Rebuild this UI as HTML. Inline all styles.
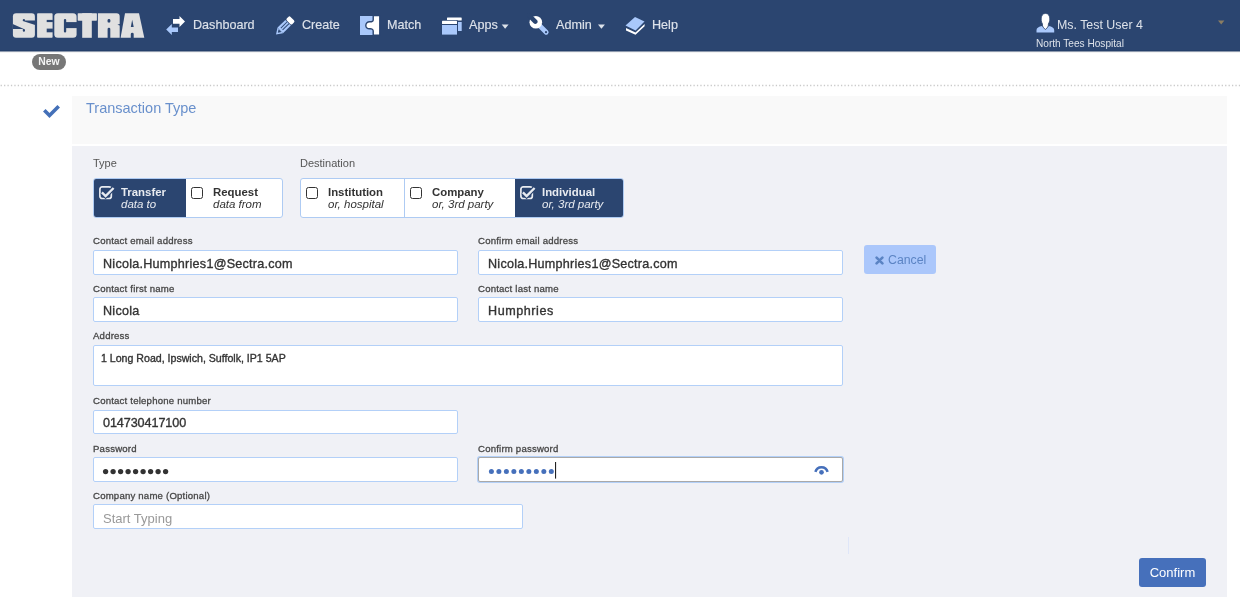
<!DOCTYPE html>
<html><head><meta charset="utf-8">
<style>
*{box-sizing:border-box;margin:0;padding:0}
html,body{width:1240px;height:600px;overflow:hidden;background:#fff;font-family:"Liberation Sans",sans-serif;position:relative}
.a{position:absolute;white-space:nowrap;will-change:transform}
#hdr{position:absolute;left:0;top:0;width:1240px;height:52px;background:#2b4570;border-bottom:1px solid #8d99ad;box-shadow:inset 0 -1px 0 #253f69,0 1px 0 #f3f3f3}
.nav{position:absolute;top:19px;font-size:12.6px;line-height:13px;color:#dde2ea;-webkit-text-stroke:0.15px #dde2ea}
.ic{position:absolute;top:15px}
#logo{position:absolute;left:13px;top:13px;width:131px;height:26px}
.lbl{position:absolute;font-size:9.6px;line-height:10px;color:#474747;-webkit-text-stroke:0.3px #474747;letter-spacing:0.2px}
.inp{position:absolute;height:25px;width:365px;background:#fff;border:1px solid #b3d0f8;border-radius:2px}
.itx{position:absolute;font-size:12.6px;line-height:13px;color:#333;-webkit-text-stroke:0.35px #333;letter-spacing:0.25px}
.bg{will-change:transform;position:absolute;top:178px;height:40px;border:1px solid #aecbf3;border-radius:3px;background:#fff;overflow:hidden}
.opt{position:absolute;top:0;height:38px}
.opt.sel{background:#2b4570}
.cb{position:absolute;top:8px;left:5px;width:12px;height:12px;border:1.6px solid #333;border-radius:2.5px}
.t1{position:absolute;top:8px;font-size:11.4px;line-height:11px;font-weight:bold;color:#333}
.t2{position:absolute;top:20px;font-size:11.5px;line-height:11px;font-style:italic;color:#333}
.sel .t1,.sel .t2{color:#e8ebf0}
</style></head>
<body>
<div id="hdr"></div>
<svg class="a" style="left:0;top:0" width="160" height="51" viewBox="0 0 160 51">
<g fill="#e0e0e0">
<rect x="12.9" y="13.2" width="22" height="24.6" rx="3.2"/>
<rect x="37.1" y="13.2" width="15.5" height="24.6" rx="0.8"/>
<rect x="54.3" y="13.2" width="22.3" height="24.6" rx="3.6"/>
<rect x="77.7" y="13.2" width="19.2" height="7.5" rx="0.6"/><rect x="82.2" y="13.2" width="9.6" height="24.6"/>
<path d="M97.9,13.2 H116.5 Q119.7,13.2 119.7,16.4 V24 L117.4,24.7 L119.7,25.5 V37.8 H97.9 Z"/>
<path d="M125,13.2 H139 L144.3,37.8 H120.6 Z"/>
</g>
<g fill="#2b4570">
<path d="M22.8,19.9 Q22.8,18.9 23.9,18.9 Q25,18.9 25,19.9 V20.6 H35.2 V25 L22.8,21.1 Z"/>
<path d="M12.7,24 L25,29.4 V30.8 Q25,31.8 23.9,31.8 Q22.8,31.8 22.8,30.8 V28.9 H12.7 Z"/>
<rect x="46.7" y="19.9" width="6.2" height="2.2"/><rect x="46.7" y="28.6" width="6.2" height="3.7"/>
<rect x="63.9" y="19" width="2.3" height="13.6" rx="1.1"/><rect x="65.5" y="22.1" width="11.5" height="6"/>
<rect x="107.6" y="19" width="2.7" height="3.6" rx="1.2"/><path d="M107.6,38 V28.9 Q107.6,27.7 108.95,27.7 Q110.3,27.7 110.3,28.9 V38 Z"/>
<path d="M132.2,19.7 L133.7,27 H130.8 Z"/><path d="M130.8,38 V34 Q130.8,32.7 132.25,32.7 Q133.7,32.7 133.7,34 V38 Z"/>
</g></svg>


<svg class="a" style="left:164px;top:13px" width="24" height="24" viewBox="0 0 24 24"><path d="M9,6 H15.5 V3 L21,8.5 L15.5,14 V10.8 H9 Z" fill="#fff"/><path d="M14,14.6 H7.8 V11 L2.2,16.6 L7.8,22 V19 H14 Z" fill="#a9c8fb"/></svg>
<svg class="a" style="left:273px;top:13px" width="24" height="24" viewBox="0 0 24 24"><g transform="translate(3,21.6) rotate(-44.5)"><path d="M0,0 L6,-3.9 L6,3.9 Z" fill="#a9c8fb"/><path d="M2.6,0 L5.6,-2 L5.6,2 Z" fill="#2b4570"/><rect x="6" y="-3.9" width="11" height="7.8" fill="#a9c8fb"/><rect x="8" y="-1.7" width="9" height="0.9" fill="#2b4570"/><rect x="8" y="0.8" width="9" height="0.9" fill="#2b4570"/><rect x="17.6" y="-4" width="5.2" height="8" rx="1.6" fill="#fff"/></g></svg>
<svg class="a" style="left:358px;top:13px" width="24" height="24" viewBox="0 0 24 24"><rect x="2" y="3" width="13" height="19" fill="#a9c8fb"/><path d="M15.2,2.6 H21.8 V22.2 H15.2 V18 C15.2,16.4 13.8,15.6 12,15.7 C9.4,16 7.8,14.6 7.8,12.4 C7.8,10.2 9.4,8.6 12,8.8 C13.8,8.9 15.2,8.2 15.2,7 Z" fill="#fff" stroke="#2b4570" stroke-width="1.4"/></svg>
<svg class="a" style="left:440px;top:13px" width="24" height="24" viewBox="0 0 24 24"><rect x="7" y="4.5" width="14.7" height="3.1" rx="0.6" fill="#fff"/><rect x="18" y="9" width="3.7" height="9" fill="#a9c8fb"/><rect x="1.3" y="7.1" width="16.4" height="15.2" fill="#2b4570"/><rect x="2" y="7.8" width="15" height="3.2" rx="0.5" fill="#fff"/><rect x="2" y="12" width="15" height="9.6" fill="#a9c8fb"/></svg>
<svg class="a" style="left:527px;top:13px" width="24" height="24" viewBox="0 0 24 24"><path d="M12.2,12.2 L19.2,19.2" stroke="#a9c8fb" stroke-width="4.8" stroke-linecap="round"/><circle cx="19" cy="19.2" r="1.1" fill="#2b4570"/><circle cx="8.8" cy="9.2" r="6.3" fill="#fff"/><path d="M8.3,8.7 L1.5,1.9" stroke="#2b4570" stroke-width="4.5" stroke-linecap="round"/></svg>
<svg class="a" style="left:623px;top:13px" width="24" height="24" viewBox="0 0 24 24"><path d="M3,15 L12.5,19.6 L21.6,11 L21.6,13.2 L12.5,21.8 L3,17.4 Z" fill="#fff"/><path d="M2.5,12.6 L12,4 L21.5,8.4 L12.6,17.6 Z" fill="#a9c8fb"/></svg>
<svg class="a" style="left:1033px;top:11px" width="24" height="24" viewBox="0 0 24 24"><path d="M3.5,21.6 V19 C3.5,16.8 6,15.6 9,15 L12.4,18.6 L15.8,15 C18.8,15.6 21.2,16.8 21.2,19 V21.6 Z" fill="#a9c8fb"/><path d="M12.5,2.4 C15.5,2.4 16.8,5 16.8,8 C16.8,10.5 16,12 15.2,13 L15.5,14 C15,16 13.5,18 12.4,18.4 C11.3,18 9.8,16 9.3,14 L9.6,13 C8.8,12 8.2,10.5 8.2,8 C8.2,5 9.5,2.4 12.5,2.4Z" fill="#fff" stroke="#2b4570" stroke-width="0.8"/></svg>
<svg class="a" style="left:1216px;top:19px" width="10" height="7" viewBox="0 0 10 7"><path d="M2,1.4 H8.4 L5.2,5.4 Z" fill="#8a7d62"/></svg>
<svg class="a" style="left:500px;top:23px" width="10" height="7" viewBox="0 0 10 7"><path d="M1.7,1.6 H8.6 L5.15,5.8 Z" fill="#dde2ea"/></svg>
<svg class="a" style="left:597px;top:23px" width="10" height="7" viewBox="0 0 10 7"><path d="M1.0,1.6 H7.9 L4.45,5.8 Z" fill="#dde2ea"/></svg>
<div class="nav a" style="left:193px">Dashboard</div>
<div class="nav a" style="left:302px">Create</div>
<div class="nav a" style="left:387px">Match</div>
<div class="nav a" style="left:469px">Apps</div>
<div class="nav a" style="left:556px">Admin</div>
<div class="nav a" style="left:652px">Help</div>

<div class="a" style="left:1057px;top:18.5px;font-size:12.4px;line-height:13px;color:#dde2ea">Ms. Test User 4</div>
<div class="a" style="left:1036px;top:38.7px;font-size:10.1px;line-height:10px;color:#dde2ea">North Tees Hospital</div>

<div class="a" style="left:32px;top:54px;width:34px;height:15.5px;border-radius:8px;background:#777;color:#f4f4f4;font-size:10.4px;line-height:16.5px;font-weight:bold;text-align:center">New</div>

<svg class="a" style="left:0;top:84px" width="1240" height="3"><line x1="0.6" y1="1.5" x2="1240" y2="1.5" stroke="#cacaca" stroke-width="1.4" stroke-dasharray="1.3 2.13"/></svg>

<svg class="a" style="left:42px;top:103px" width="20" height="17" viewBox="0 0 20 17"><path d="M2.3,7.3 L7.5,12.5 L16.7,3.3" fill="none" stroke="#4470b8" stroke-width="3.6"/></svg>

<div class="a" style="left:72px;top:96px;width:1155px;height:48px;background:#f9f9f9"></div>
<div class="a" style="left:86px;top:101px;font-size:14.5px;line-height:15px;color:#6990cc">Transaction Type</div>

<div class="a" style="left:72px;top:146px;width:1155px;height:451px;background:#f0f1f6"></div>

<div class="a" style="left:93px;top:158px;font-size:11px;line-height:10px;color:#555">Type</div>
<div class="a" style="left:300px;top:158px;font-size:11px;line-height:10px;color:#555">Destination</div>

<div class="bg" style="left:93px;width:190px">
  <div class="opt sel" style="left:0;width:92px"><svg style="position:absolute;left:5px;top:7px" width="17" height="15" viewBox="0 0 17 15"><rect x="0.9" y="0.9" width="11.4" height="11.6" rx="2.3" fill="none" stroke="#e8ebf0" stroke-width="1.7"/><path d="M2.9,6.3 L6.6,10 L14.6,2" fill="none" stroke="#2b4570" stroke-width="4.6"/><path d="M2.9,6.3 L6.6,10 L14.6,2" fill="none" stroke="#e8ebf0" stroke-width="2.4"/></svg><div class="t1" style="left:27px">Transfer</div><div class="t2" style="left:27px">data to</div></div>
  <div class="opt" style="left:92px;width:97px"><div class="cb"></div><div class="t1" style="left:27px">Request</div><div class="t2" style="left:27px">data from</div></div>
</div>
<div class="bg" style="left:300px;width:324px">
  <div class="opt" style="left:0;width:104px;border-right:1px solid #aecbf3"><div class="cb"></div><div class="t1" style="left:27px">Institution</div><div class="t2" style="left:27px">or, hospital</div></div>
  <div class="opt" style="left:104px;width:110px"><div class="cb"></div><div class="t1" style="left:27px">Company</div><div class="t2" style="left:27px">or, 3rd party</div></div>
  <div class="opt sel" style="left:214px;width:110px"><svg style="position:absolute;left:5px;top:7px" width="17" height="15" viewBox="0 0 17 15"><rect x="0.9" y="0.9" width="11.4" height="11.6" rx="2.3" fill="none" stroke="#e8ebf0" stroke-width="1.7"/><path d="M2.9,6.3 L6.6,10 L14.6,2" fill="none" stroke="#2b4570" stroke-width="4.6"/><path d="M2.9,6.3 L6.6,10 L14.6,2" fill="none" stroke="#e8ebf0" stroke-width="2.4"/></svg><div class="t1" style="left:27px">Individual</div><div class="t2" style="left:27px">or, 3rd party</div></div>
</div>

<div class="lbl a" style="left:93px;top:236px">Contact email address</div>
<div class="inp" style="left:93px;top:250px;height:24.5px"></div>
<div class="itx a" style="left:103px;top:258px">Nicola.Humphries1@Sectra.com</div>
<div class="lbl a" style="left:478px;top:236px">Confirm email address</div>
<div class="inp" style="left:478px;top:250px;height:24.5px"></div>
<div class="itx a" style="left:488px;top:258px">Nicola.Humphries1@Sectra.com</div>

<div class="a" style="left:864px;top:245px;width:72px;height:29px;border-radius:3px;background:#abc7fb"></div><svg class="a" style="left:875px;top:256px" width="9" height="9" viewBox="0 0 9 9"><path d="M1.6,1.6 L7.4,7.4 M7.4,1.6 L1.6,7.4" stroke="#5b84c4" stroke-width="2.6" stroke-linecap="round"/></svg><div class="a" style="left:888px;top:254px;font-size:12.3px;line-height:13px;color:#5b84c4">Cancel</div>

<div class="lbl a" style="left:93px;top:284px">Contact first name</div>
<div class="inp" style="left:93px;top:297px"></div>
<div class="itx a" style="left:103px;top:305px">Nicola</div>
<div class="lbl a" style="left:478px;top:284px">Contact last name</div>
<div class="inp" style="left:478px;top:297px"></div>
<div class="itx a" style="left:488px;top:305px;letter-spacing:0.55px">Humphries</div>

<div class="lbl a" style="left:93px;top:331px">Address</div>
<div class="inp" style="left:93px;top:345px;width:750px;height:41px"></div>
<div class="itx a" style="left:101px;top:353px;font-size:10.6px;line-height:11px;-webkit-text-stroke:0.35px #333;letter-spacing:0">1 Long Road, Ipswich, Suffolk, IP1 5AP</div>

<div class="lbl a" style="left:93px;top:396px">Contact telephone number</div>
<div class="inp" style="left:93px;top:410px;height:24px"></div>
<div class="itx a" style="left:103px;top:417px;letter-spacing:-0.08px">014730417100</div>

<div class="lbl a" style="left:93px;top:444px">Password</div>
<div class="inp" style="left:93px;top:457px"></div>
<div class="lbl a" style="left:478px;top:444px">Confirm password</div>
<div class="inp" style="left:478px;top:457px;border-color:#a9a9a9;box-shadow:0 0 0 1px #b3d0f8"></div>

<svg class="a" style="left:93px;top:457px" width="200" height="25"><circle cx="12.60" cy="14.6" r="2.65" fill="#333"/><circle cx="20.10" cy="14.6" r="2.65" fill="#333"/><circle cx="27.60" cy="14.6" r="2.65" fill="#333"/><circle cx="35.10" cy="14.6" r="2.65" fill="#333"/><circle cx="42.60" cy="14.6" r="2.65" fill="#333"/><circle cx="50.10" cy="14.6" r="2.65" fill="#333"/><circle cx="57.60" cy="14.6" r="2.65" fill="#333"/><circle cx="65.10" cy="14.6" r="2.65" fill="#333"/><circle cx="72.60" cy="14.6" r="2.65" fill="#333"/></svg>
<svg class="a" style="left:478px;top:457px" width="365" height="25"><circle cx="13.40" cy="14.6" r="2.5" fill="#4670bb"/><circle cx="20.89" cy="14.6" r="2.5" fill="#4670bb"/><circle cx="28.38" cy="14.6" r="2.5" fill="#4670bb"/><circle cx="35.87" cy="14.6" r="2.5" fill="#4670bb"/><circle cx="43.36" cy="14.6" r="2.5" fill="#4670bb"/><circle cx="50.85" cy="14.6" r="2.5" fill="#4670bb"/><circle cx="58.34" cy="14.6" r="2.5" fill="#4670bb"/><circle cx="65.83" cy="14.6" r="2.5" fill="#4670bb"/><circle cx="73.32" cy="14.6" r="2.5" fill="#4670bb"/><rect x="77" y="5" width="1.1" height="16.6" fill="#222"/><path d="M337.4,14.9 A6.3,6.3 0 0 1 349.6,14.9" fill="none" stroke="#4670bb" stroke-width="2.5"/><circle cx="343.5" cy="15.3" r="2.35" fill="#4670bb"/></svg>
<div class="a" style="left:848px;top:537px;width:1px;height:17px;background:#dfe6f8"></div>
<div class="lbl a" style="left:93px;top:491px">Company name (Optional)</div>
<div class="inp" style="left:93px;top:504px;width:430px"></div>
<div class="a" style="left:103px;top:512px;font-size:13px;line-height:13px;color:#999">Start Typing</div>

<div class="a" style="left:1139px;top:558px;width:67px;height:29px;border-radius:3px;background:#4670bb;color:#fff;font-size:13px;line-height:29px;text-align:center">Confirm</div>

</body></html>
